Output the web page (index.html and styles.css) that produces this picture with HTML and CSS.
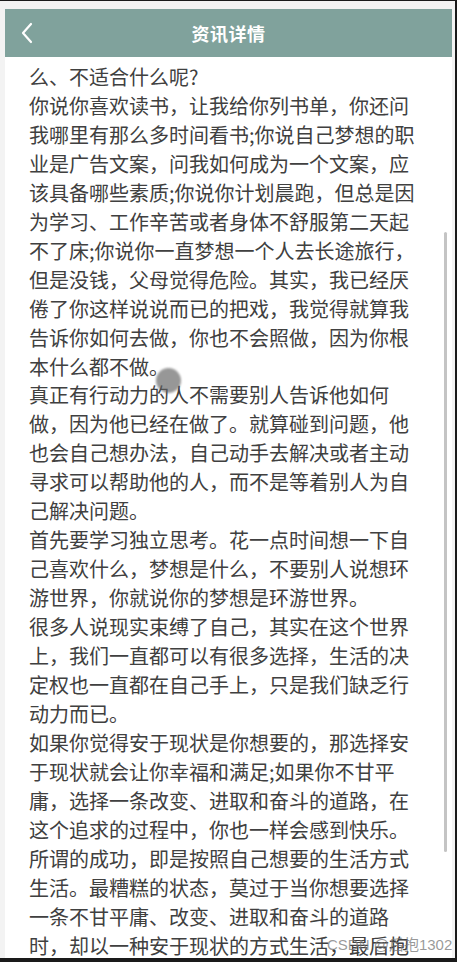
FILE: index.html
```html
<!DOCTYPE html>
<html lang="zh">
<head>
<meta charset="utf-8">
<title>资讯详情</title>
<link rel="stylesheet" href="styles.css">
</head>
<body>
<div class="device">
  <div class="screen">
    <header class="nav">
      <svg class="back" width="14" height="22" viewBox="0 0 14 22"><path d="M11 2 L3 11 L11 20" fill="none" stroke="#fff" stroke-width="2.2" stroke-linecap="round" stroke-linejoin="round"/></svg>
      <h1 class="title">资讯详情</h1>
    </header>
    <main class="content">
      <p>么、不适合什么呢?</p>
      <p>你说你喜欢读书，让我给你列书单，你还问我哪里有那么多时间看书;你说自己梦想的职业是广告文案，问我如何成为一个文案，应该具备哪些素质;你说你计划晨跑，但总是因为学习、工作辛苦或者身体不舒服第二天起不了床;你说你一直梦想一个人去长途旅行，但是没钱，父母觉得危险。其实，我已经厌倦了你这样说说而已的把戏，我觉得就算我告诉你如何去做，你也不会照做，因为你根本什么都不做。</p>
      <p>真正有行动力的人不需要别人告诉他如何做，因为他已经在做了。就算碰到问题，他也会自己想办法，自己动手去解决或者主动寻求可以帮助他的人，而不是等着别人为自己解决问题。</p>
      <p>首先要学习独立思考。花一点时间想一下自己喜欢什么，梦想是什么，不要别人说想环游世界，你就说你的梦想是环游世界。</p>
      <p>很多人说现实束缚了自己，其实在这个世界上，我们一直都可以有很多选择，生活的决定权也一直都在自己手上，只是我们缺乏行动力而已。</p>
      <p>如果你觉得安于现状是你想要的，那选择安于现状就会让你幸福和满足;如果你不甘平庸，选择一条改变、进取和奋斗的道路，在这个追求的过程中，你也一样会感到快乐。</p>
      <p>所谓的成功，即是按照自己想要的生活方式生活。最糟糕的状态，莫过于当你想要选择一条不甘平庸、改变、进取和奋斗的道路时，却以一种安于现状的方式生活，最后抱怨自己没有得到想要的生活。</p>
    </main>
    <div class="scrollbar"></div>
    <div class="touch"></div>
    <div class="watermark">CSDN @后抱1302</div>
  </div>
</div>
</body>
</html>
```

FILE: styles.css
```css
html, body {
  margin: 0;
  padding: 0;
  background: #fff;
}
.device {
  width: 457px;
  height: 962px;
  box-sizing: border-box;
  border-top: 1px solid #1a1a1a;
  border-right: 2px solid #1a1a1a;
  border-bottom: 4px solid #1a1a1a;
  background: #f3f3f3;
  padding: 8px 3px 0 5px;
}
.screen {
  position: relative;
  width: 447px;
  height: 949px;
  background: #fff;
  overflow: hidden;
  font-family: "Noto Sans CJK SC", "Noto Sans", sans-serif;
}
.nav {
  position: relative;
  height: 48px;
  background: #80a29c;
  display: flex;
  align-items: center;
  justify-content: center;
}
.back {
  position: absolute;
  left: 15px;
  top: 13px;
}
.title {
  margin: 0;
  color: #fff;
  font-size: 18px;
  font-weight: 700;
  letter-spacing: 0.5px;
}
.content {
  padding: 6px 27px 0 24px;
  color: #404040;
  font-size: 20px;
  line-height: 28.95px;
}
.content p {
  margin: 0;
}
.scrollbar {
  position: absolute;
  left: 439px;
  top: 223px;
  width: 3px;
  height: 620px;
  background: #c4c4c4;
  border-radius: 2px;
}
.touch {
  position: absolute;
  left: 151px;
  top: 359px;
  width: 25px;
  height: 25px;
  border-radius: 50%;
  background: rgba(95, 95, 95, 0.65);
  filter: blur(1px);
}
.watermark {
  position: absolute;
  left: 322px;
  top: 926px;
  white-space: nowrap;
  font-size: 15px;
  line-height: 20px;
  color: rgba(120, 120, 120, 0.75);
  font-family: "Liberation Sans", "Noto Sans CJK SC", sans-serif;
}
```
